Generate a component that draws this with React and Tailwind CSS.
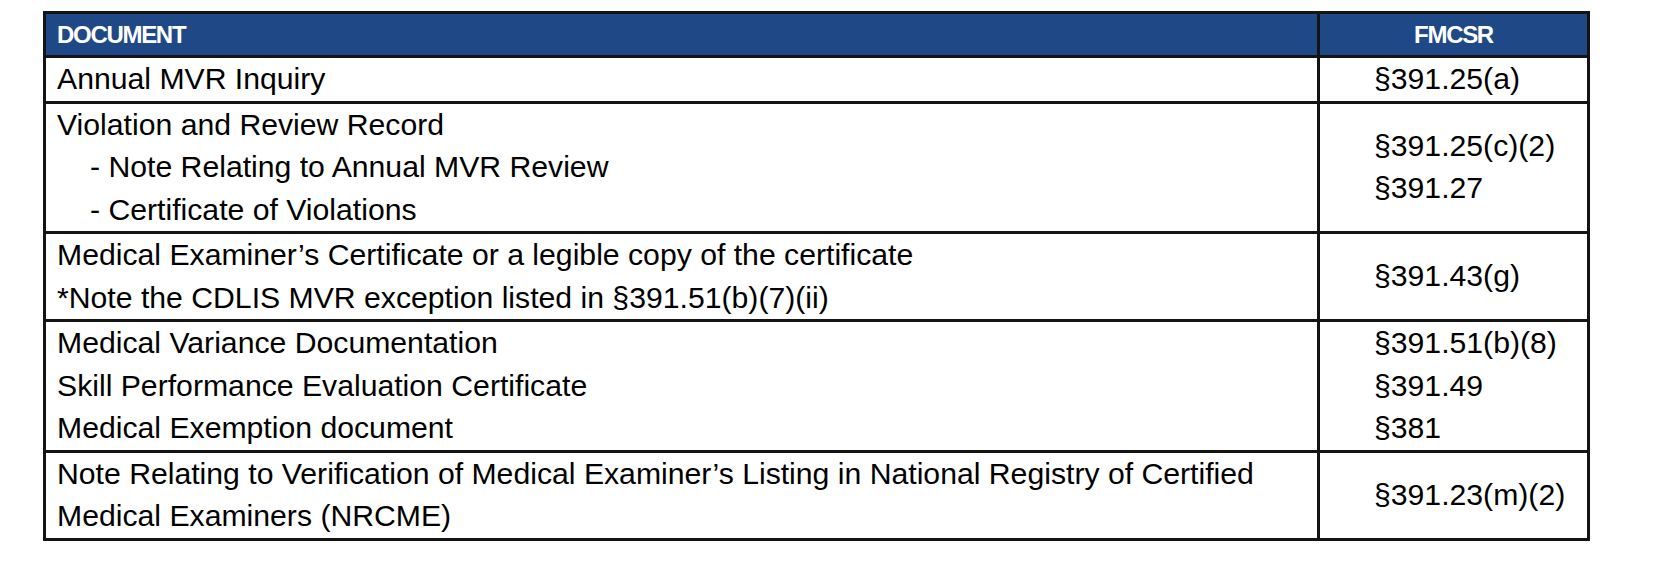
const rows = [
  {
    doc: [{ text: "Annual MVR Inquiry" }],
    refs: ["§391.25(a)"],
  },
  {
    doc: [
      { text: "Violation and Review Record" },
      { text: "- Note Relating to Annual MVR Review", indent: true },
      { text: "- Certificate of Violations", indent: true },
    ],
    refs: ["§391.25(c)(2)", "§391.27"],
  },
  {
    doc: [
      { text: "Medical Examiner’s Certificate or a legible copy of the certificate" },
      { text: "*Note the CDLIS MVR exception listed in §391.51(b)(7)(ii)" },
    ],
    refs: ["§391.43(g)"],
  },
  {
    doc: [
      { text: "Medical Variance Documentation" },
      { text: "Skill Performance Evaluation Certificate" },
      { text: "Medical Exemption document" },
    ],
    refs: ["§391.51(b)(8)", "§391.49", "§381"],
  },
  {
    doc: [
      { text: "Note Relating to Verification of Medical Examiner’s Listing in National Registry of Certified" },
      { text: "Medical Examiners (NRCME)" },
    ],
    refs: ["§391.23(m)(2)"],
  },
];

const font = { fontFamily: '"Liberation Sans", Arial, Helvetica, sans-serif' };

const App = () => {
  return (
    <div className="bg-white w-[1656px] h-[570px] pl-[43px] pt-[11px]" style={font}>
      <div className="w-[1547px] border-[3px] border-[#141414] text-black">
        {/* header */}
        <div className="flex bg-[#1f4986] text-white font-bold text-[24px] tracking-[-1.3px] leading-[41px]">
          <div className="flex-1 border-r-[3px] border-[#141414] pl-[11px]">DOCUMENT</div>
          <div className="w-[267px] text-center">FMCSR</div>
        </div>

        {rows.map((row, i) => (
          <div key={i} className="flex border-t-[3px] border-[#141414] text-[30.2px] leading-[42.5px]">
            <div className="flex-1 border-r-[3px] border-[#141414] pl-[11px]">
              {row.doc.map((line, j) => (
                <div key={j} className={`whitespace-nowrap ${line.indent ? "pl-[33px]" : ""}`}>
                  {line.text}
                </div>
              ))}
            </div>
            <div className="w-[267px] pl-[54px] flex flex-col justify-center">
              {row.refs.map((ref, j) => (
                <div key={j} className="whitespace-nowrap">{ref}</div>
              ))}
            </div>
          </div>
        ))}
      </div>
    </div>
  );
};

export default App;
